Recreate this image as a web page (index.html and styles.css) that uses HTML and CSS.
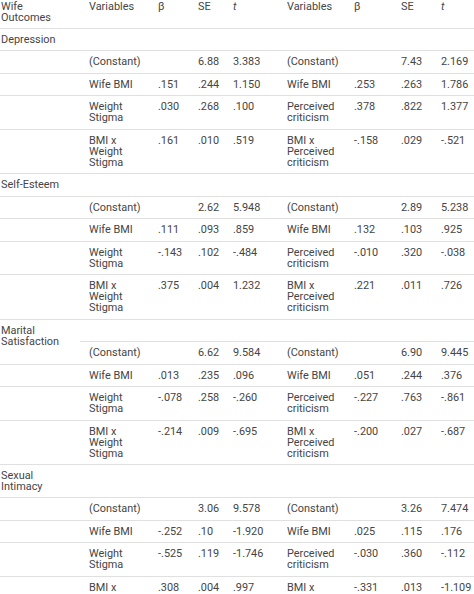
FILE: index.html
```html
<!DOCTYPE html>
<html>
<head>
<meta charset="utf-8">
<link rel="stylesheet" href="styles.css">
</head>
<body>
<div class="results" role="table">
  <div class="cell head">Wife<br>Outcomes</div><div class="cell head">Variables</div><div class="cell head">β</div><div class="cell head">SE</div><div class="cell head"><i>t</i></div><div class="cell head">Variables</div><div class="cell head">β</div><div class="cell head">SE</div><div class="cell head"><i>t</i></div>

  <div class="cell">Depression</div><div class="cell fill"></div>
  <div class="cell"></div><div class="cell">(Constant)</div><div class="cell"></div><div class="cell">6.88</div><div class="cell">3.383</div><div class="cell">(Constant)</div><div class="cell"></div><div class="cell">7.43</div><div class="cell">2.169</div>
  <div class="cell"></div><div class="cell">Wife BMI</div><div class="cell">.151</div><div class="cell">.244</div><div class="cell">1.150</div><div class="cell">Wife BMI</div><div class="cell">.253</div><div class="cell">.263</div><div class="cell">1.786</div>
  <div class="cell"></div><div class="cell">Weight<br>Stigma</div><div class="cell">.030</div><div class="cell">.268</div><div class="cell">.100</div><div class="cell">Perceived<br>criticism</div><div class="cell">.378</div><div class="cell">.822</div><div class="cell">1.377</div>
  <div class="cell"></div><div class="cell">BMI x<br>Weight<br>Stigma</div><div class="cell">.161</div><div class="cell">.010</div><div class="cell">.519</div><div class="cell">BMI x<br>Perceived<br>criticism</div><div class="cell">-.158</div><div class="cell">.029</div><div class="cell">-.521</div>

  <div class="cell">Self-Esteem</div><div class="cell fill"></div>
  <div class="cell"></div><div class="cell">(Constant)</div><div class="cell"></div><div class="cell">2.62</div><div class="cell">5.948</div><div class="cell">(Constant)</div><div class="cell"></div><div class="cell">2.89</div><div class="cell">5.238</div>
  <div class="cell"></div><div class="cell">Wife BMI</div><div class="cell">.111</div><div class="cell">.093</div><div class="cell">.859</div><div class="cell">Wife BMI</div><div class="cell">.132</div><div class="cell">.103</div><div class="cell">.925</div>
  <div class="cell"></div><div class="cell">Weight<br>Stigma</div><div class="cell">-.143</div><div class="cell">.102</div><div class="cell">-.484</div><div class="cell">Perceived<br>criticism</div><div class="cell">-.010</div><div class="cell">.320</div><div class="cell">-.038</div>
  <div class="cell"></div><div class="cell">BMI x<br>Weight<br>Stigma</div><div class="cell">.375</div><div class="cell">.004</div><div class="cell">1.232</div><div class="cell">BMI x<br>Perceived<br>criticism</div><div class="cell">.221</div><div class="cell">.011</div><div class="cell">.726</div>

  <div class="cell span2">Marital<br>Satisfaction</div><div class="cell fill"></div>
  <div class="cell">(Constant)</div><div class="cell"></div><div class="cell">6.62</div><div class="cell">9.584</div><div class="cell">(Constant)</div><div class="cell"></div><div class="cell">6.90</div><div class="cell">9.445</div>
  <div class="cell"></div><div class="cell">Wife BMI</div><div class="cell">.013</div><div class="cell">.235</div><div class="cell">.096</div><div class="cell">Wife BMI</div><div class="cell">.051</div><div class="cell">.244</div><div class="cell">.376</div>
  <div class="cell"></div><div class="cell">Weight<br>Stigma</div><div class="cell">-.078</div><div class="cell">.258</div><div class="cell">-.260</div><div class="cell">Perceived<br>criticism</div><div class="cell">-.227</div><div class="cell">.763</div><div class="cell">-.861</div>
  <div class="cell"></div><div class="cell">BMI x<br>Weight<br>Stigma</div><div class="cell">-.214</div><div class="cell">.009</div><div class="cell">-.695</div><div class="cell">BMI x<br>Perceived<br>criticism</div><div class="cell">-.200</div><div class="cell">.027</div><div class="cell">-.687</div>

  <div class="cell">Sexual<br>Intimacy</div><div class="cell fill"></div>
  <div class="cell"></div><div class="cell">(Constant)</div><div class="cell"></div><div class="cell">3.06</div><div class="cell">9.578</div><div class="cell">(Constant)</div><div class="cell"></div><div class="cell">3.26</div><div class="cell">7.474</div>
  <div class="cell"></div><div class="cell">Wife BMI</div><div class="cell">-.252</div><div class="cell">.10</div><div class="cell">-1.920</div><div class="cell">Wife BMI</div><div class="cell">.025</div><div class="cell">.115</div><div class="cell">.176</div>
  <div class="cell"></div><div class="cell">Weight<br>Stigma</div><div class="cell">-.525</div><div class="cell">.119</div><div class="cell">-1.746</div><div class="cell">Perceived<br>criticism</div><div class="cell">-.030</div><div class="cell">.360</div><div class="cell">-.112</div>
  <div class="cell"></div><div class="cell">BMI x<br>Weight<br>Stigma</div><div class="cell">.308</div><div class="cell">.004</div><div class="cell">.997</div><div class="cell">BMI x<br>Perceived<br>criticism</div><div class="cell">-.331</div><div class="cell">.013</div><div class="cell">-1.109</div>
</div>
</body>
</html>
```
FILE: styles.css
```css
html, body {
  margin: 0;
  padding: 0;
  background: #ffffff;
  overflow: hidden;
}
.results {
  display: grid;
  grid-template-columns: 88px 69px 40px 35px 54px 67px 47px 40px 50px;
  width: 490px;
  margin: -4.5px 0 0 -8px;
  font-family: Roboto, "Liberation Sans", Arial, sans-serif;
  font-size: 10.9px;
  line-height: 11px;
  color: #454545;
}
.cell {
  min-height: 11px;
  padding: 5px 0 5.47px 9px;
  border-bottom: 1px solid #e0e0e0;
  white-space: nowrap;
}
.cell i { font-style: italic; }
.fill { grid-column: span 8; }
.span2 { grid-row: span 2; }
```
